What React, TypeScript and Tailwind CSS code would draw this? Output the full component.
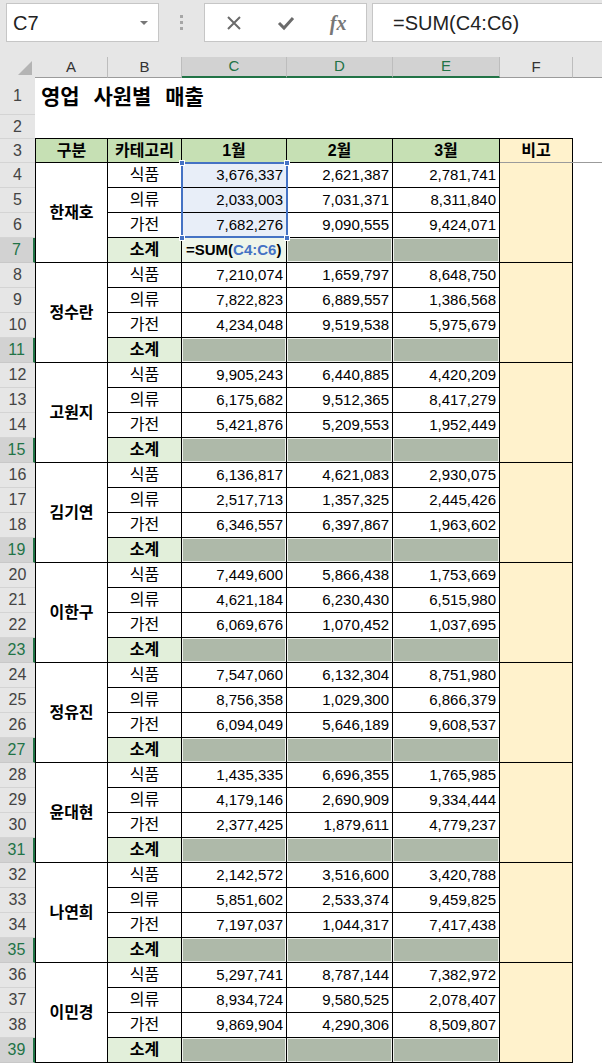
import React from "react";

type Group = { name: string; rows: number[][] };

const groups: Group[] = [
  { name: "한재호", rows: [[3676337, 2621387, 2781741], [2033003, 7031371, 8311840], [7682276, 9090555, 9424071]] },
  { name: "정수란", rows: [[7210074, 1659797, 8648750], [7822823, 6889557, 1386568], [4234048, 9519538, 5975679]] },
  { name: "고원지", rows: [[9905243, 6440885, 4420209], [6175682, 9512365, 8417279], [5421876, 5209553, 1952449]] },
  { name: "김기연", rows: [[6136817, 4621083, 2930075], [2517713, 1357325, 2445426], [6346557, 6397867, 1963602]] },
  { name: "이한구", rows: [[7449600, 5866438, 1753669], [4621184, 6230430, 6515980], [6069676, 1070452, 1037695]] },
  { name: "정유진", rows: [[7547060, 6132304, 8751980], [8756358, 1029300, 6866379], [6094049, 5646189, 9608537]] },
  { name: "윤대현", rows: [[1435335, 6696355, 1765985], [4179146, 2690909, 9334444], [2377425, 1879611, 4779237]] },
  { name: "나연희", rows: [[2142572, 3516600, 3420788], [5851602, 2533374, 9459825], [7197037, 1044317, 7417438]] },
  { name: "이민경", rows: [[5297741, 8787144, 7382972], [8934724, 9580525, 2078407], [9869904, 4290306, 8509807]] },
];

const categories = ["식품", "의류", "가전"];

const fmt = (n: number) => n.toLocaleString("en-US");

const font = "font-['Liberation_Sans','Noto_Sans_CJK_KR',sans-serif]";

function RowHeader({ n, selected }: { n: number; selected?: boolean }) {
  return (
    <div
      className={
        selected
          ? "flex items-center justify-center bg-[#d2d2d2] border-b border-[#c8c8c8] border-r-2 border-r-[#217346] text-[16px] text-[#217346]"
          : "flex items-center justify-center bg-[#e6e6e6] border-b border-[#d4d4d4] text-[16px] text-[#444]"
      }
    >
      {n}
    </div>
  );
}

function FormulaBar() {
  return (
    <div className="flex h-[57px] items-start bg-[#e6e6e6] pl-[6px] pt-[3px]">
      <div className="flex h-[39px] w-[153px] items-center justify-between border border-[#c6c6c6] bg-white pl-[6px] pr-[10px]">
        <span className="text-[20px] text-[#222]">C7</span>
        <span className="h-0 w-0 border-x-[4px] border-t-[4px] border-x-transparent border-t-[#777]" />
      </div>
      <div className="flex w-[45px] flex-col items-center gap-[3px] pt-[12px]">
        <span className="h-[3px] w-[3px] bg-[#a6a6a6]" />
        <span className="h-[3px] w-[3px] bg-[#a6a6a6]" />
        <span className="h-[3px] w-[3px] bg-[#a6a6a6]" />
      </div>
      <div className="flex h-[39px] w-[163px] items-center border border-[#c6c6c6] bg-white">
        <div className="flex w-[56px] justify-center pl-[2px]">
          <svg width="16" height="16" viewBox="0 0 16 16">
            <path d="M2 2 L14 14 M14 2 L2 14" stroke="#6b6b6b" strokeWidth="2" />
          </svg>
        </div>
        <div className="flex w-[50px] justify-center">
          <svg width="18" height="16" viewBox="0 0 18 16">
            <path d="M2 8 L7 13 L16 3" stroke="#6b6b6b" strokeWidth="3" fill="none" />
          </svg>
        </div>
        <div className="flex w-[56px] justify-center">
          <span className="font-['Liberation_Serif',serif] text-[20px] font-bold italic text-[#777]">fx</span>
        </div>
      </div>
      <div className="ml-[5px] flex h-[39px] flex-1 items-center border border-r-0 border-[#c6c6c6] bg-white pl-[20px]">
        <span className="text-[20px] text-[#222]">=SUM(C4:C6)</span>
      </div>
    </div>
  );
}

function ColumnHeaders() {
  const cols = [
    { l: "A", w: "w-[73px]", sel: false },
    { l: "B", w: "w-[74px]", sel: false },
    { l: "C", w: "w-[105px]", sel: true },
    { l: "D", w: "w-[106px]", sel: true },
    { l: "E", w: "w-[107px]", sel: true },
    { l: "F", w: "w-[73px]", sel: false },
  ];
  return (
    <div className="flex h-[21px] bg-[#e6e6e6]">
      <div className="relative w-[35px]">
        <span className="absolute bottom-[3px] right-[3px] h-0 w-0 border-b-[14px] border-l-[14px] border-b-[#b4b4b4] border-l-transparent" />
      </div>
      {cols.map((c) =>
        c.sel ? (
          <div
            key={c.l}
            className={`${c.w} flex items-center justify-center border-r border-[#bdbdbd] border-b-2 border-b-[#217346] bg-[#d2d2d2] text-[15px] text-[#217346]`}
          >
            {c.l}
          </div>
        ) : (
          <div
            key={c.l}
            className={`${c.w} flex items-center justify-center border-r border-[#bdbdbd] border-b border-b-[#9b9b9b] text-[15px] text-[#333]`}
          >
            {c.l}
          </div>
        )
      )}
      <div className="flex-1 border-b border-b-[#9b9b9b]" />
    </div>
  );
}

export default function App() {
  const cells: React.ReactNode[] = [];

  // row 1
  cells.push(<RowHeader key="h1" n={1} />);
  cells.push(
    <div key="title" className="col-span-7 flex items-center pl-[6px] text-[21px] font-bold text-black [word-spacing:8px]">
      영업 사원별 매출
    </div>
  );

  // row 2
  cells.push(<RowHeader key="h2" n={2} />);
  for (let i = 0; i < 6; i++) cells.push(<div key={`r2-${i}`} className="border-b border-black" />);
  cells.push(<div key="r2-g" />);

  // row 3
  cells.push(<RowHeader key="h3" n={3} />);
  ["구분", "카테고리", "1월", "2월", "3월"].map((t, i) =>
    cells.push(
      <div
        key={`hd-${t}`}
        className={`${i === 0 ? "border-l " : ""}flex items-center justify-center border-r border-b border-black bg-[#c6e0b4] text-[16px] font-bold`}
      >
        {t}
      </div>
    )
  );
  cells.push(
    <div key="hd-f" className="flex items-center justify-center border-r border-b border-black bg-[#fff2cc] text-[16px] font-bold">
      비고
    </div>
  );
  cells.push(<div key="r3-g" />);

  groups.forEach((g, gi) => {
    for (let r = 0; r < 4; r++) {
      const rowNum = 4 + gi * 4 + r;
      const sub = r === 3;
      cells.push(<RowHeader key={`h${rowNum}`} n={rowNum} selected={sub} />);
      if (r === 0) {
        cells.push(
          <div key={`a${rowNum}`} className="row-span-4 flex items-center justify-center border-l border-r border-b border-black bg-white text-[16px] font-bold">
            {g.name}
          </div>
        );
      }
      cells.push(
        sub ? (
          <div key={`b${rowNum}`} className="flex items-center justify-center border-r border-b border-black bg-[#e2efda] text-[16px] font-bold">
            소계
          </div>
        ) : (
          <div key={`b${rowNum}`} className="flex items-center justify-center border-r border-b border-black text-[16px]">
            {categories[r]}
          </div>
        )
      );
      for (let c = 0; c < 3; c++) {
        if (sub) {
          if (gi === 0 && c === 0) {
            cells.push(
              <div key={`v${rowNum}-${c}`} className="flex items-center border-r border-b border-black bg-[#eef5ea] pl-[4px] text-[15px] font-bold whitespace-nowrap">
                =SUM(<span className="text-[#4472c4]">C4:C6</span>)
              </div>
            );
          } else {
            cells.push(
              <div key={`v${rowNum}-${c}`} className="border-r border-b border-black bg-[#aeb9a9] shadow-[inset_0_0_0_1px_#eef1ec]" />
            );
          }
        } else {
          const blue = gi === 0 && c === 0;
          cells.push(
            <div
              key={`v${rowNum}-${c}`}
              className={`${blue ? "bg-[#e8eef8] " : ""}flex items-center justify-end border-r border-b border-black pr-[3px] text-[15px]`}
            >
              {fmt(g.rows[r][c])}
            </div>
          );
        }
      }
      if (r === 0) {
        cells.push(<div key={`f${rowNum}`} className="row-span-4 border-r border-b border-black bg-[#fff2cc]" />);
      }
      cells.push(<div key={`g${rowNum}`} />);
    }
  });

  return (
    <div className={`${font} w-[602px] h-[1063px] overflow-hidden bg-white text-black`}>
      <FormulaBar />
      <ColumnHeaders />
      <div className="relative">
        <div className="grid grid-cols-[35px_73px_74px_105px_106px_107px_73px_1fr] grid-rows-[37px_24px_24px_repeat(36,25px)]">
          {cells}
        </div>
        {/* freeze pane line */}
        <div className="absolute left-[500px] top-[84px] h-px w-[102px] bg-[#9b9b9b]" />
        {/* formula reference range C4:C6 */}
        <div className="absolute left-[181px] top-[84px] h-[76px] w-[107px] border-2 border-[#4472c4]" />
        <span className="absolute left-[179px] top-[82px] h-[6px] w-[6px] border border-white bg-[#4472c4]" />
        <span className="absolute left-[284px] top-[82px] h-[6px] w-[6px] border border-white bg-[#4472c4]" />
        <span className="absolute left-[179px] top-[157px] h-[6px] w-[6px] border border-white bg-[#4472c4]" />
        <span className="absolute left-[284px] top-[157px] h-[6px] w-[6px] border border-white bg-[#4472c4]" />
      </div>
    </div>
  );
}
